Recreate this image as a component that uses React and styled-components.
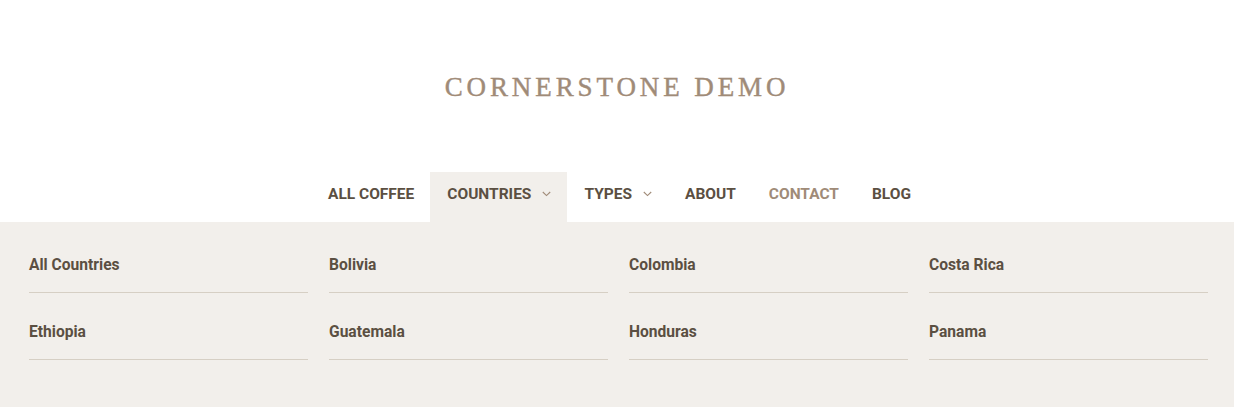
import React from 'react'
import styled, { createGlobalStyle } from 'styled-components'

const GlobalStyle = createGlobalStyle`
  html, body { margin: 0; padding: 0; background: #fff; }
  body { font-family: Roboto, "Liberation Sans", sans-serif; }
`

const Header = styled.header`
  display: flex;
  justify-content: center;
  height: 172px;
  box-sizing: border-box;
  padding-top: 69px;
`

const Brand = styled.h1`
  margin: 0;
  font-family: "Liberation Serif", "DejaVu Serif", serif;
  font-weight: 400;
  font-size: 27px;
  line-height: 36px;
  letter-spacing: 3.9px;
  color: #a08b78;
  -webkit-text-stroke: 0.4px #a08b78;
  text-transform: uppercase;
`

const Nav = styled.nav`
  display: flex;
  justify-content: center;
  height: 50px;
  padding-left: 4px;
`

const NavItem = styled.a`
  display: flex;
  align-items: center;
  gap: 11px;
  padding: 0 16px 6px 17px;
  font-size: 15.5px;
  font-weight: 700;
  text-transform: uppercase;
  color: ${p => (p.$muted ? '#a08b78' : '#5b4f42')};
  background: ${p => (p.$active ? '#f2efeb' : 'transparent')};
  text-decoration: none;
  cursor: pointer;
`

const Chevron = () => (
  <svg width="9" height="6" viewBox="0 0 9 6" fill="none">
    <path d="M0.8 1 L4.5 4.6 L8.2 1" stroke="#a08b78" strokeWidth="1.1" />
  </svg>
)

const Panel = styled.div`
  background: #f2efeb;
  padding: 15px 26px 60px 29px;
  display: grid;
  grid-template-columns: repeat(4, 1fr);
  column-gap: 21px;
  row-gap: 11px;
`

const Country = styled.a`
  display: block;
  padding: 18px 0 17px;
  line-height: 20px;
  font-size: 15.6px;
  font-weight: 700;
  color: #5b4f42;
  border-bottom: 1px solid #d6cfc4;
  text-decoration: none;
`

const navLinks = [
  { label: 'All Coffee' },
  { label: 'Countries', drop: true, active: true },
  { label: 'Types', drop: true },
  { label: 'About' },
  { label: 'Contact', muted: true },
  { label: 'Blog' },
]

const countries = [
  'All Countries', 'Bolivia', 'Colombia', 'Costa Rica',
  'Ethiopia', 'Guatemala', 'Honduras', 'Panama',
]

export default function App() {
  return (
    <>
      <GlobalStyle />
      <Header>
        <Brand>Cornerstone Demo</Brand>
      </Header>
      <Nav>
        {navLinks.map(l => (
          <NavItem key={l.label} $active={l.active} $muted={l.muted}>
            {l.label}
            {l.drop && <Chevron />}
          </NavItem>
        ))}
      </Nav>
      <Panel>
        {countries.map(c => (
          <Country key={c}>{c}</Country>
        ))}
      </Panel>
    </>
  )
}
